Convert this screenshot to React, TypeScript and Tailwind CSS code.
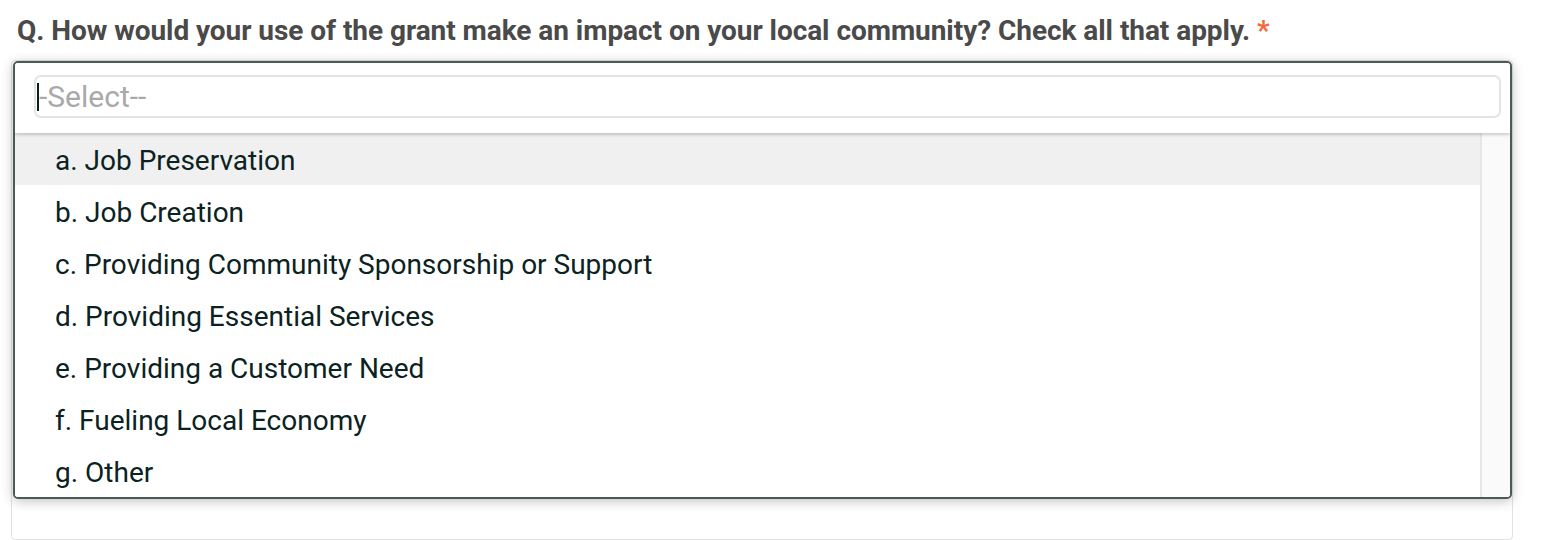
import React from "react";

const options = [
  "a. Job Preservation",
  "b. Job Creation",
  "c. Providing Community Sponsorship or Support",
  "d. Providing Essential Services",
  "e. Providing a Customer Need",
  "f. Fueling Local Economy",
  "g. Other",
];

export default function App() {
  return (
    <div className="w-[1542px] h-[540px] bg-white overflow-hidden" style={{ fontFamily: "Roboto, 'Liberation Sans', sans-serif" }}>
      <div className="pl-[17px] pt-[14px] h-[60px]">
        <h1 className="text-[28px] font-bold text-[#4a4a4a] leading-[34px] tracking-[-0.05px]">
          Q. How would your use of the grant make an impact on your local community? Check all that apply.{" "}
          <span className="text-[#f26a3d]">*</span>
        </h1>
      </div>
      <div className="relative ml-[11px] w-[1502px] h-[480px] border border-[#e2e2e0] rounded-[4px]">
        <div className="absolute left-[1px] top-[0px] w-[1499px] h-[438px] bg-white border-2 border-[#4b5a59] rounded-[5px] shadow-[0_2px_12px_rgba(0,0,0,0.25)] overflow-hidden flex flex-col">
          <div className="h-[71px] pl-[19px] pr-[9px] pt-[12px] shadow-[0_2px_3px_rgba(0,0,0,0.18)] relative z-10 bg-white">
            <div className="h-[43px] border-2 border-[#e4e4e2] rounded-[7px] flex items-center pl-[1px]">
              <span className="w-[2px] h-[28px] bg-[#0b1f1c]" />
              <span className="text-[30px] text-[#a9a9a9] leading-none">-Select--</span>
            </div>
          </div>
          <div className="flex flex-1">
            <div className="flex-1 flex flex-col">
              {options.map((o, i) => (
                <div
                  key={o}
                  className={`h-[52px] pl-[40px] pt-[3px] flex items-center text-[28px] text-[#0b221f] ${i === 0 ? "bg-[#f0f0f0]" : "bg-white"}`}
                >
                  {o}
                </div>
              ))}
            </div>
            <div className="w-[30px] bg-[#fafafa] border-l-2 border-[#e6e6e6]" />
          </div>
        </div>
      </div>
    </div>
  );
}
